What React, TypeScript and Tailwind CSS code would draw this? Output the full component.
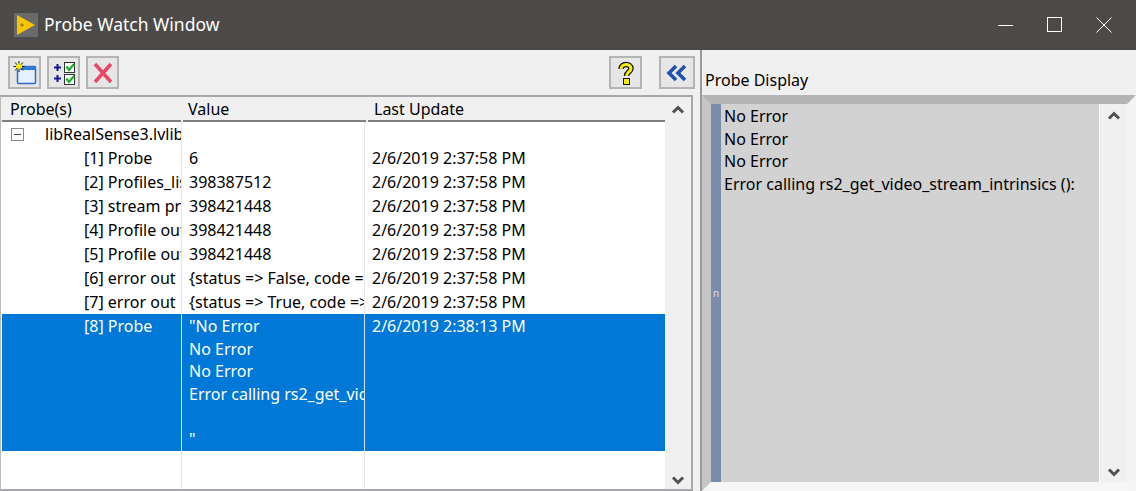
import React from 'react';

type Row = { name: string; value: string; time: string };

const rows: Row[] = [
  { name: '[1] Probe', value: '6', time: '2/6/2019 2:37:58 PM' },
  { name: '[2] Profiles_list', value: '398387512', time: '2/6/2019 2:37:58 PM' },
  { name: '[3] stream profile', value: '398421448', time: '2/6/2019 2:37:58 PM' },
  { name: '[4] Profile out', value: '398421448', time: '2/6/2019 2:37:58 PM' },
  { name: '[5] Profile out', value: '398421448', time: '2/6/2019 2:37:58 PM' },
  { name: '[6] error out', value: '{status => False, code => 0}', time: '2/6/2019 2:37:58 PM' },
  { name: '[7] error out', value: '{status => True, code => 1}', time: '2/6/2019 2:37:58 PM' },
];

const ToolButton: React.FC<{ className?: string; children: React.ReactNode }> = ({ className, children }) => (
  <div className={`w-[33px] h-[33px] flex items-center justify-center border-2 border-[#b4b4b4] bg-[#e6e6e6] ${className ?? ''}`}>
    {children}
  </div>
);

const Chevron: React.FC<{ down?: boolean }> = ({ down }) => (
  <svg width="14" height="10" viewBox="0 0 14 10">
    <path d={down ? 'M2 2.5 L7 7.5 L12 2.5' : 'M2 7.5 L7 2.5 L12 7.5'} fill="none" stroke="#505050" strokeWidth="3" />
  </svg>
);

export default function App() {
  return (
    <div className="w-[1136px] h-[491px] overflow-hidden bg-[#f0f0f0] text-[16px] text-black flex flex-col font-['Noto_Sans',sans-serif]">
      {/* title bar */}
      <div className="h-[50px] shrink-0 bg-[#4c4a48] flex items-center text-white">
        <div className="ml-[14px] w-[24px] h-[24px] bg-[#6a6a6a] flex items-center justify-center">
          <svg width="24" height="24" viewBox="0 0 24 24">
            <path d="M3 2 L21 12 L3 22 Z" fill="#f7c600" />
            <path d="M6 12 H10 M8 10 V14" stroke="#8a7400" strokeWidth="1" />
          </svg>
        </div>
        <span className="ml-[6px] text-[17.5px] leading-none">Probe Watch Window</span>
        <div className="ml-auto flex items-center">
          <svg width="16" height="16" viewBox="0 0 16 16" className="mr-[33px]">
            <path d="M0 8.5 H15" stroke="#fff" />
          </svg>
          <svg width="16" height="16" viewBox="0 0 16 16" className="mr-[33px]">
            <rect x="0.5" y="0.5" width="14" height="14" fill="none" stroke="#fff" />
          </svg>
          <svg width="16" height="16" viewBox="0 0 16 16" className="mr-[24px]">
            <path d="M0.5 0.5 L15.5 15.5 M15.5 0.5 L0.5 15.5" stroke="#fff" />
          </svg>
        </div>
      </div>

      <div className="flex-1 flex min-h-0">
        {/* left pane */}
        <div className="w-[700px] shrink-0 flex flex-col">
          <div className="h-[45px] shrink-0 flex items-center pl-[8px] pr-[5px] gap-[6px]">
            <ToolButton>
              <svg width="26" height="26" viewBox="0 0 26 26">
                <rect x="5.5" y="6.5" width="18" height="17" rx="1" fill="#e4efff" stroke="#2a6cc8" strokeWidth="1.5" />
                <rect x="5" y="6" width="19" height="4" fill="#2f78d8" />
                <path d="M7 1 L7 12 M1.5 6.5 L12.5 6.5 M3 2.5 L11 10.5 M11 2.5 L3 10.5" stroke="#111" strokeWidth="1" />
                <path d="M4 6.5 H10 M7 3.5 V9.5" stroke="#ffe800" strokeWidth="3" />
              </svg>
            </ToolButton>
            <ToolButton>
              <svg width="26" height="26" viewBox="0 0 26 26">
                <path d="M3 7.5 H10 M6.5 4 V11 M3 18.5 H10 M6.5 15 V22" stroke="#14148c" strokeWidth="2" />
                <rect x="13.5" y="2.5" width="10" height="10" fill="#fff" stroke="#333" />
                <rect x="13.5" y="14.5" width="10" height="10" fill="#fff" stroke="#333" />
                <path d="M15.5 6.5 L18 10 L23 4 M15.5 18.5 L18 22 L23 16" fill="none" stroke="#18b030" strokeWidth="2.2" />
              </svg>
            </ToolButton>
            <ToolButton>
              <svg width="24" height="24" viewBox="0 0 24 24">
                <path d="M4 3 L20 21 M20 3 L4 21" stroke="#ee4466" strokeWidth="3.5" />
              </svg>
            </ToolButton>
            <ToolButton className="ml-auto">
              <svg width="24" height="26" viewBox="0 0 24 26">
                <path d="M7 9 C7 3 17 3 17 8.5 C17 12 12.5 12 12.5 16" fill="none" stroke="#111" strokeWidth="5.5" />
                <path d="M7 9 C7 3 17 3 17 8.5 C17 12 12.5 12 12.5 16" fill="none" stroke="#f6f000" strokeWidth="3" />
                <rect x="9.5" y="18.5" width="6" height="6" fill="#f6f000" stroke="#111" />
              </svg>
            </ToolButton>
            <ToolButton className="ml-[11px] w-[36px]">
              <svg width="24" height="20" viewBox="0 0 24 20">
                <path d="M11 3 L4 10 L11 17 M20 3 L13 10 L20 17" fill="none" stroke="#1d50b0" strokeWidth="3.5" />
              </svg>
            </ToolButton>
          </div>

          {/* probe table */}
          <div className="flex-1 min-h-0 mr-[7px] border-2 border-[#a8a8ac] border-l-[#bcbcbc] border-l flex">
            <div className="w-[664px] shrink-0 flex flex-col bg-white">
              <div className="h-[25px] shrink-0 bg-[#f0f0f0] flex leading-[24px]">
                <div className="w-[179px] ml-[1px] pl-[8px] border-b-2 border-[#808080]">Probe(s)</div>
                <div className="w-[183px] ml-[2px] pl-[5px] border-b-2 border-[#808080]">Value</div>
                <div className="flex-1 ml-[2px] pl-[6px] border-b-2 border-[#808080]">Last Update</div>
              </div>
              <div className="flex h-[24px] leading-[24px]">
                <div className="w-[181px] border-r border-[#e8e8e8] flex items-center overflow-hidden whitespace-nowrap">
                  <div className="ml-[10px] w-[13px] h-[13px] shrink-0 border border-[#8a8a8a] flex items-center justify-center">
                    <div className="w-[7px] h-px bg-[#444]" />
                  </div>
                  <span className="ml-[21px]">libRealSense3.lvlib</span>
                </div>
                <div className="w-[183px] border-r border-[#e8e8e8]" />
              </div>
              {rows.map((row) => (
                <div key={row.name} className="flex h-[24px] leading-[24px] whitespace-nowrap">
                  <div className="w-[181px] pl-[83px] border-r border-[#e8e8e8] overflow-hidden">{row.name}</div>
                  <div className="w-[183px] pl-[7px] border-r border-[#e8e8e8] overflow-hidden">{row.value}</div>
                  <div className="pl-[7px]">{row.time}</div>
                </div>
              ))}
              <div className="flex h-[137px] bg-[#0078d7] text-white leading-[22.5px] whitespace-nowrap ml-[1px]">
                <div className="w-[180px] pl-[82px] pt-[1px] border-r border-[#cfe4f7] overflow-hidden">[8] Probe</div>
                <div className="w-[183px] pl-[7px] pt-[1px] border-r border-[#cfe4f7] overflow-hidden">
                  <div>"No Error</div>
                  <div>No Error</div>
                  <div>No Error</div>
                  <div>Error calling rs2_get_video_stream_intrinsics ():</div>
                  <div>&nbsp;</div>
                  <div>"</div>
                </div>
                <div className="pl-[7px] pt-[1px]">2/6/2019 2:38:13 PM</div>
              </div>
              <div className="flex flex-1">
                <div className="w-[181px] border-r border-[#e8e8e8]" />
                <div className="w-[183px] border-r border-[#e8e8e8]" />
              </div>
            </div>
            <div className="flex-1 bg-[#f0f0f0] flex flex-col items-center justify-between pt-[8px] pb-[4px] pr-[1px]">
              <Chevron />
              <Chevron down />
            </div>
          </div>
        </div>

        {/* splitter */}
        <div className="w-[2px] shrink-0 bg-[#9a9a9a]" />

        {/* right pane */}
        <div className="flex-1 min-w-0 flex flex-col">
          <div className="h-[45px] shrink-0 flex items-end pl-[3px] pb-[5px] leading-[20px]">Probe Display</div>
          <div className="flex-1 min-h-0 border-[9px] border-t-[#b4b4b4] border-l-[#c6c6c6] border-r-[#f4f4f4] border-b-[#f6f6f6] flex">
            <div className="w-[10px] shrink-0 bg-[#7b8cab] flex items-center justify-center text-[10px] text-[#d8dde6]">n</div>
            <div className="w-[378px] shrink-0 bg-[#d2d2d2] pl-[3px] pt-px leading-[22.5px] whitespace-nowrap overflow-hidden">
              <div>No Error</div>
              <div>No Error</div>
              <div>No Error</div>
              <div>Error calling rs2_get_video_stream_intrinsics ():</div>
            </div>
            <div className="flex-1 bg-[#f0f0f0] border-l border-white flex flex-col items-center justify-between pt-[7px] pb-[5px]">
              <Chevron />
              <Chevron down />
            </div>
          </div>
        </div>
      </div>
    </div>
  );
}
